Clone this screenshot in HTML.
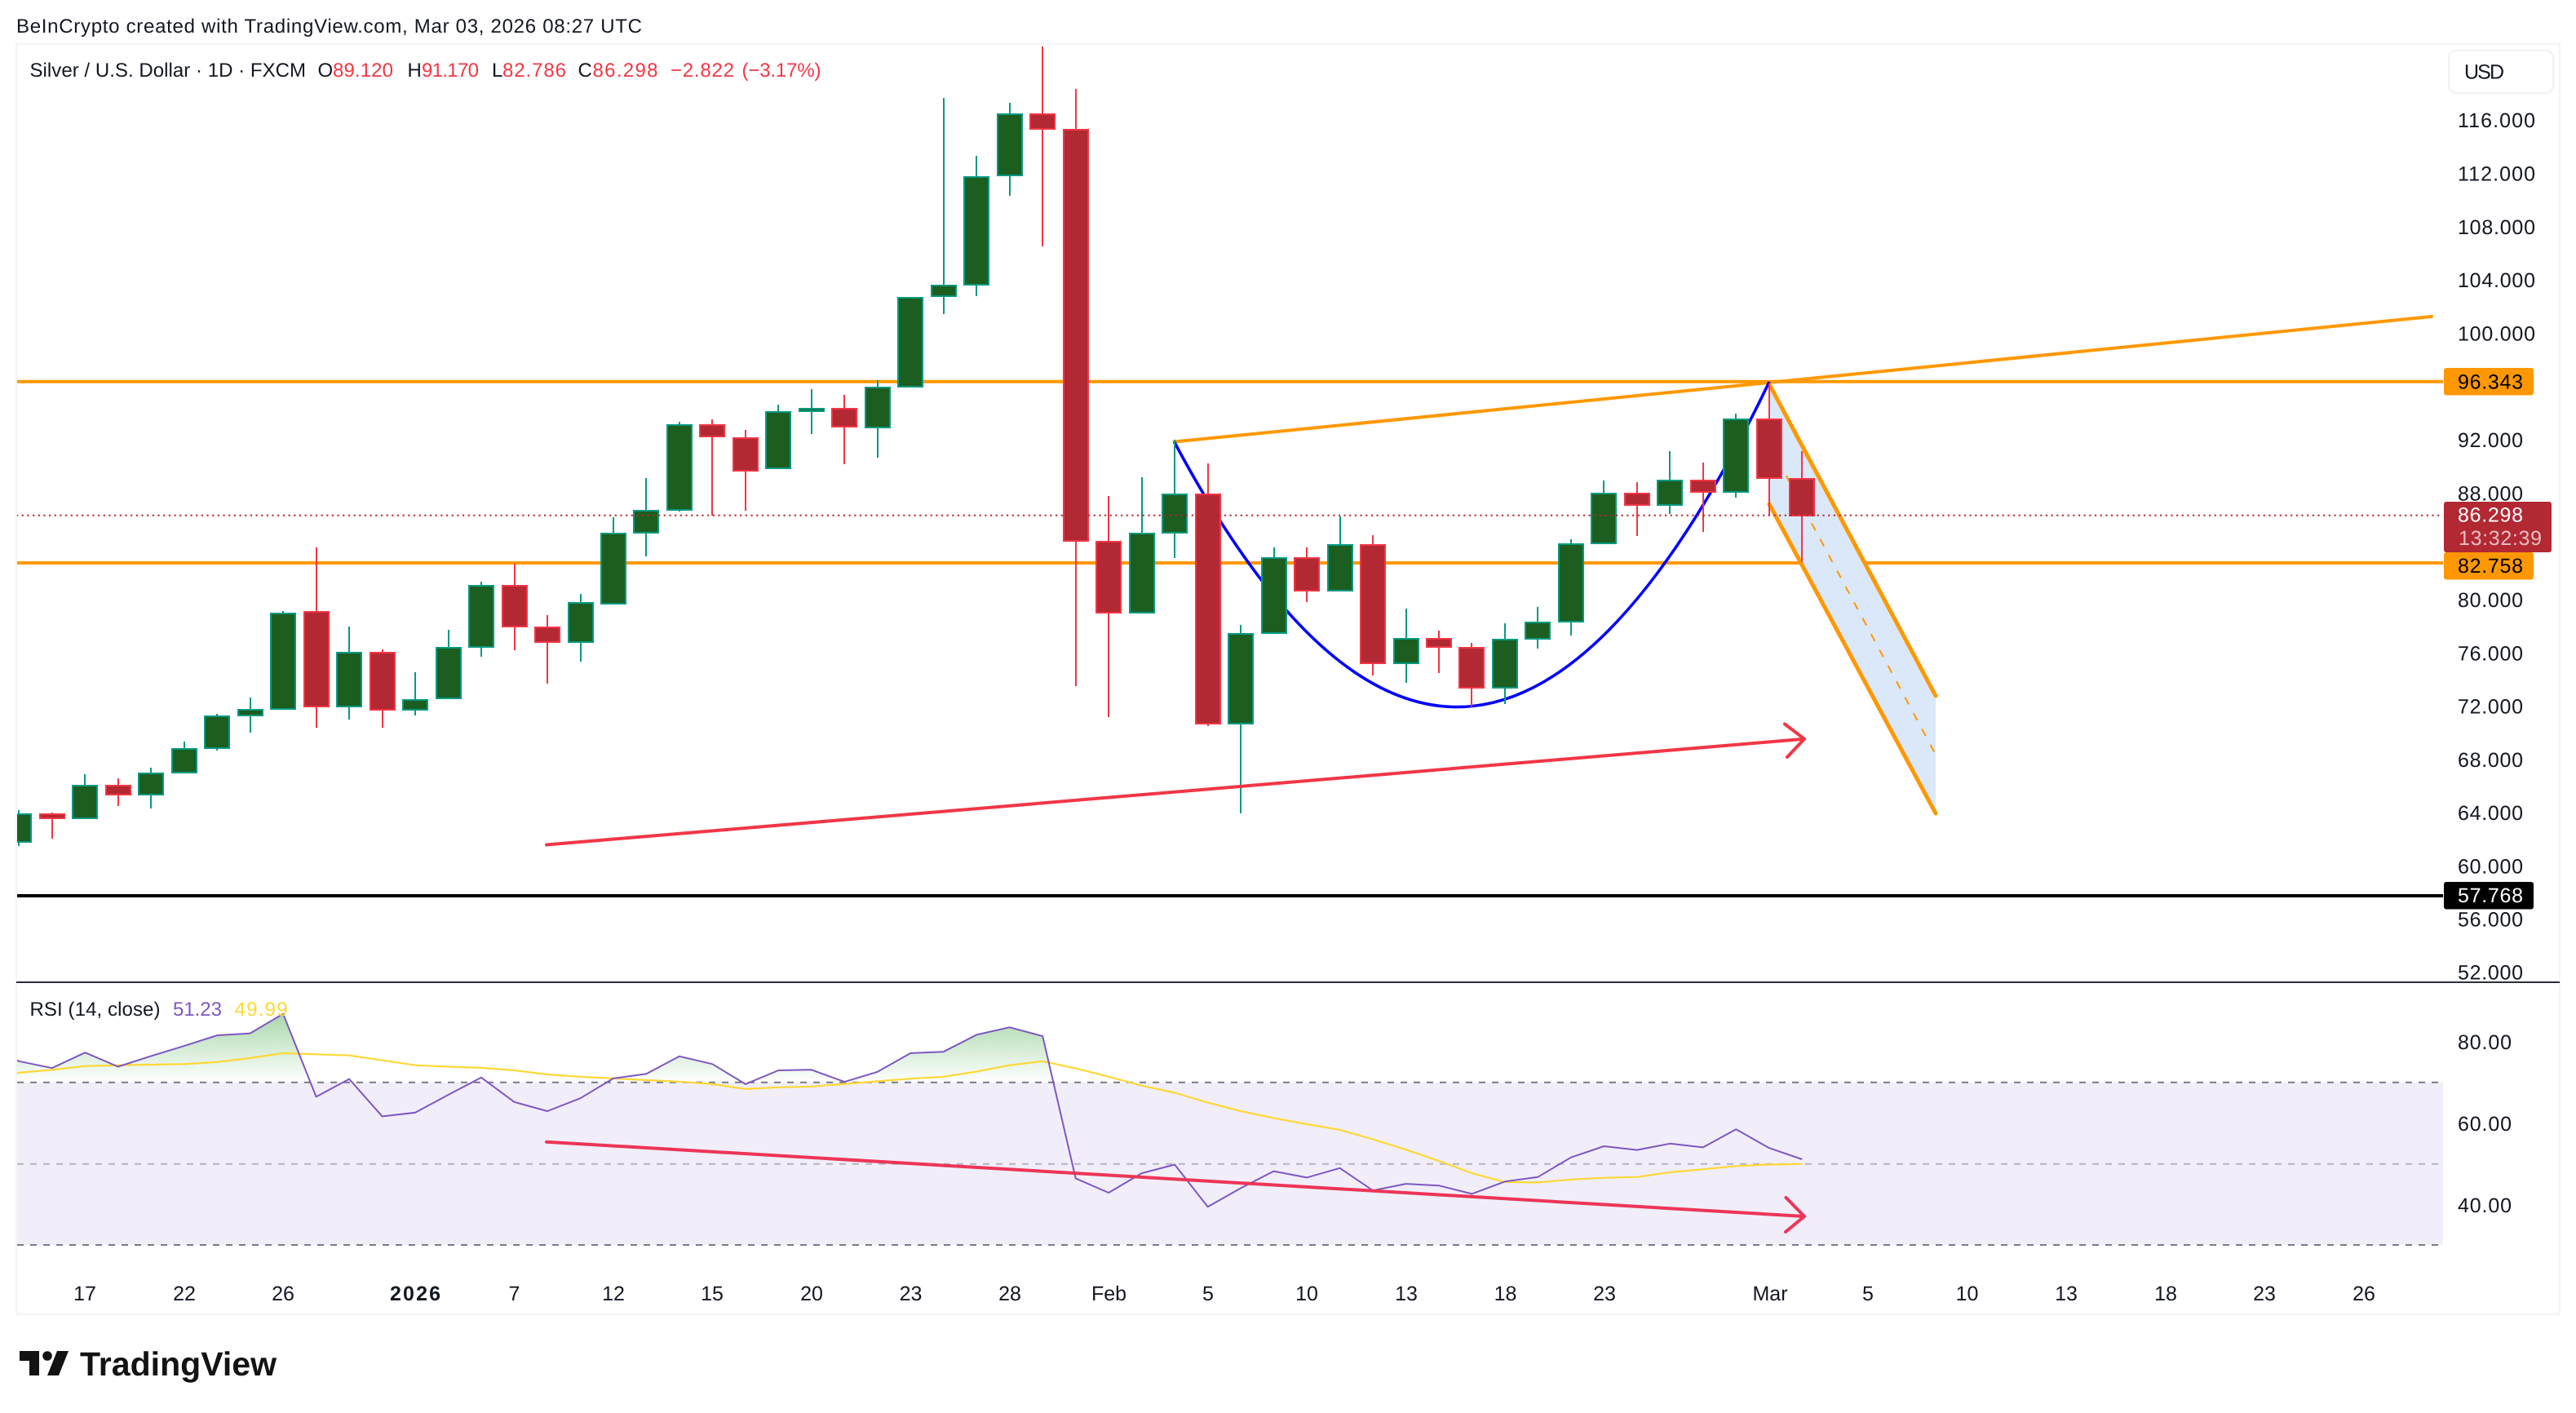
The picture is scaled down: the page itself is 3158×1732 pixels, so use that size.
<!DOCTYPE html>
<html><head><meta charset="utf-8"><title>Silver / U.S. Dollar</title>
<style>
html,body{margin:0;padding:0;background:#fff;width:3158px;height:1732px;overflow:hidden}
svg{display:block}
text{font-family:"Liberation Sans",sans-serif;font-size:25px;fill:#131722;text-rendering:geometricPrecision}
.r{fill:#F23645}
.hd{font-size:24px}
.ax text{text-anchor:middle}
</style></head><body>
<svg width="3158" height="1732" viewBox="0 0 3158 1732" xmlns="http://www.w3.org/2000/svg">
<defs>
<clipPath id="pc"><rect x="21" y="55" width="2974" height="1148"/></clipPath>
<clipPath id="rc"><rect x="21" y="1205" width="2974" height="370"/></clipPath>
<clipPath id="ob"><rect x="21" y="1205" width="2974" height="121.8"/></clipPath>
<linearGradient id="gg" gradientUnits="userSpaceOnUse" x1="0" y1="1240" x2="0" y2="1327">
<stop offset="0" stop-color="#4CAF50" stop-opacity=".5"/><stop offset="1" stop-color="#4CAF50" stop-opacity="0"/>
</linearGradient>
</defs>
<rect width="3158" height="1732" fill="#fff"/>
<text class="hd" x="20" y="40" textLength="767">BeInCrypto created with TradingView.com, Mar 03, 2026 08:27 UTC</text>
<rect x="20" y="54" width="3118" height="1557" fill="#fff" stroke="#f4f4f4" stroke-width="2"/>

<g clip-path="url(#pc)">
<path d="M20 467.7H2995M20 690H2995" stroke="#FF9800" stroke-width="4" fill="none"/>
<path d="M20 1098H2995" stroke="#000" stroke-width="4" fill="none"/>
<path d="M2169 471L2373 853V997L2169 618Z" fill="#dbe8fa"/>
<path d="M2169 471L2373 853M2169 618L2373 997" stroke="#FF9800" stroke-width="5" stroke-linecap="round" fill="none"/>
<path d="M2169 544.5L2373 925" stroke="#FF9800" stroke-width="2" stroke-dasharray="10 12" fill="none"/>
<path d="M1439.5 541.5L2981 388" stroke="#FF9800" stroke-width="4" stroke-linecap="round" fill="none"/>
<path d="M1439.5 541.5Q1805 1226.5 2169 468" stroke="#0000ff" stroke-width="3.6" fill="none"/>

<path stroke="#089981" stroke-width="2" fill="none" d="M23 993V1037M104 949V1004M185 941V991M226 909V948M266 875V920M307 855V898M347 749V870M428 768V882M509 824V877M550 772V857M590 713V805M712 728V811M752 634V741M792 586V682M833 517V627M954 496V575M995 477V532M1076 466V561M1157 120V385M1197 191V363M1238 126V240M1400 585V752M1440 539V684M1521 766V997M1562 671V777M1643 633V725M1724 746V837M1845 764V863M1885 744V795M1926 661V779M1966 589V667M2047 553V630M2128 507V610"/>
<path stroke="#F23645" stroke-width="2" fill="none" d="M64 996V1028M145 954V988M388 671V892M469 796V892M631 691V797M671 754V838M873 514V632M914 527V626M1035 484V569M1278 57V302M1319 109V841M1359 608V879M1481 568V890M1602 671V738M1683 656V828M1764 773V825M1804 788V867M2007 591V657M2088 567V652M2169 470V632M2209 553V689"/>
<path fill="#1B5E20" stroke="#089981" stroke-width="2" d="M8 998h30V1032h-30zM89 963h30V1003h-30zM170 948h30V974h-30zM211 918h30V947h-30zM251 878h30V917h-30zM292 870h30V877h-30zM332 752h30V869h-30zM413 800h30V866h-30zM494 858h30V870h-30zM535 794h30V856h-30zM575 718h30V793h-30zM697 739h30V787h-30zM737 654h30V740h-30zM777 626h30V653h-30zM818 521h30V625h-30zM939 505h30V574h-30zM980 501h30V504h-30zM1061 475h30V524h-30zM1101 365h30V474h-30zM1142 350h30V363h-30zM1182 217h30V349h-30zM1223 140h30V215h-30zM1385 654h30V751h-30zM1425 606h30V653h-30zM1506 777h30V887h-30zM1547 684h30V776h-30zM1628 668h30V724h-30zM1709 783h30V813h-30zM1830 784h30V843h-30zM1870 763h30V783h-30zM1911 667h30V762h-30zM1951 605h30V666h-30zM2032 589h30V619h-30zM2113 514h30V603h-30z"/>
<path fill="#B22833" stroke="#F23645" stroke-width="2" d="M49 998h30V1003h-30zM130 963h30V974h-30zM373 750h30V866h-30zM454 800h30V870h-30zM616 718h30V768h-30zM656 769h30V787h-30zM858 521h30V535h-30zM899 537h30V577h-30zM1020 501h30V523h-30zM1263 140h30V158h-30zM1304 159h30V663h-30zM1344 664h30V751h-30zM1466 606h30V887h-30zM1587 684h30V724h-30zM1668 668h30V813h-30zM1749 783h30V793h-30zM1789 794h30V843h-30zM1992 605h30V619h-30zM2073 589h30V603h-30zM2154 514h30V586h-30zM2194 587h30V632h-30z"/>

<path d="M20 631.8H2995" stroke="#B22833" stroke-width="2" stroke-dasharray="2.2 4.47" fill="none"/>
<path d="M670 1035.5L2212 905.8M2188 887.5L2212 905.8L2191 928" stroke="#F23645" stroke-width="4" stroke-linecap="round" stroke-linejoin="round" fill="none"/>
</g>

<!-- Separator -->
<rect x="20" y="1203" width="3118" height="2" fill="#2a2e39"/>

<!-- RSI -->
<rect x="21" y="1327" width="2974" height="199" fill="#f1eef9"/>
<path d="M21 1326.8H2995M21 1526H2995" stroke="#787b86" stroke-width="2" stroke-dasharray="8 8" fill="none"/>
<path d="M21 1426.8H2995" stroke="#787b86" stroke-opacity=".5" stroke-width="2" stroke-dasharray="8 8" fill="none"/>
<g clip-path="url(#ob)">
<path fill="url(#gg)" d="M19 1326.8L19 1299L23.3 1300.8L63.8 1309.2L104.3 1290.2L144.7 1307.5L185.2 1294.4L225.7 1282.1L266.2 1269.1L306.7 1266.6L347.1 1242.7L387.6 1344.4L428.1 1322.6L468.6 1368.4L509.1 1363.8L549.5 1342L590 1320.8L630.5 1350.8L671 1362L711.5 1346.2L751.9 1321.9L792.4 1316.3L832.9 1294.8L873.4 1304.3L913.9 1328.9L954.3 1312L994.8 1311.3L1035.3 1326.1L1075.8 1313.8L1116.3 1290.9L1156.7 1289.2L1197.2 1268.4L1237.7 1259.2L1278.2 1270.1L1318.7 1444.4L1318.7 1326.8Z"/>
</g>
<g clip-path="url(#rc)" fill="none" stroke-linejoin="round">
<polyline stroke="#FDD835" stroke-width="2.2" points="19 1316 23.3 1314.9 63.8 1311.3 104.3 1306.8 144.7 1305.7 185.2 1305 225.7 1304.3 266.2 1301.8 306.7 1296.9 347.1 1290.9 387.6 1292.3 428.1 1293.7 468.6 1299.7 509.1 1305.7 549.5 1307.5 590 1308.9 630.5 1312 671 1317 711.5 1319.8 751.9 1321.9 792.4 1324 832.9 1325.8 873.4 1328.9 913.9 1334.9 954.3 1332.8 994.8 1331.8 1035.3 1328.6 1075.8 1325.4 1116.3 1322.2 1156.7 1319.8 1197.2 1313.4 1237.7 1305.7 1278.2 1300.8 1318.7 1309.6 1359.1 1319.8 1399.6 1330.7 1440.1 1339.5 1480.6 1351.5 1521.1 1362 1561.5 1370.5 1602 1377.9 1642.5 1384.9 1683 1396.5 1723.5 1409.2 1763.9 1422.9 1804.4 1438.1 1844.9 1449 1885.4 1449.4 1925.9 1445.8 1966.3 1443.7 2006.8 1442.7 2047.3 1437 2087.8 1433.2 2128.3 1429.3 2168.7 1427.5 2209.2 1426.8"/>
<polyline stroke="#7E57C2" stroke-width="2" points="19 1299 23.3 1300.8 63.8 1309.2 104.3 1290.2 144.7 1307.5 185.2 1294.4 225.7 1282.1 266.2 1269.1 306.7 1266.6 347.1 1242.7 387.6 1344.4 428.1 1322.6 468.6 1368.4 509.1 1363.8 549.5 1342 590 1320.8 630.5 1350.8 671 1362 711.5 1346.2 751.9 1321.9 792.4 1316.3 832.9 1294.8 873.4 1304.3 913.9 1328.9 954.3 1312 994.8 1311.3 1035.3 1326.1 1075.8 1313.8 1116.3 1290.9 1156.7 1289.2 1197.2 1268.4 1237.7 1259.2 1278.2 1270.1 1318.7 1444.4 1359.1 1462 1399.6 1438.1 1440.1 1427.5 1480.6 1479.3 1521.1 1456.4 1561.5 1435.6 1602 1443.4 1642.5 1431.8 1683 1459.2 1723.5 1451.1 1763.9 1453.2 1804.4 1463.4 1844.9 1448.3 1885.4 1442.7 1925.9 1418.7 1966.3 1405 2006.8 1409.6 2047.3 1401.8 2087.8 1406.4 2128.3 1384.2 2168.7 1407.1 2209.2 1421"/>
<path d="M670 1399.7L2212 1491M2189.5 1468L2212 1491L2189 1510" stroke="#ec3558" stroke-width="4" stroke-linecap="round" stroke-linejoin="round"/>
</g>

<!-- Legends -->
<text class="hd" x="36.5" y="94" textLength="338.5">Silver / U.S. Dollar · 1D · FXCM</text>
<text class="hd" x="389.5" y="94">O</text><text class="hd r" x="408" y="94" textLength="74">89.120</text>
<text class="hd" x="499.5" y="94">H</text><text class="hd r" x="517" y="94" textLength="70">91.170</text>
<text class="hd" x="603" y="94">L</text><text class="hd r" x="616" y="94" textLength="78">82.786</text>
<text class="hd" x="708.5" y="94">C</text><text class="hd r" x="726.5" y="94" textLength="80">86.298</text>
<text class="hd r" x="822" y="94" textLength="78">−2.822</text>
<text class="hd r" x="909.5" y="94" textLength="97">(−3.17%)</text>
<text class="hd" x="36.5" y="1245" textLength="160">RSI (14, close)</text>
<text class="hd" x="212" y="1245" textLength="60" style="fill:#7E57C2">51.23</text>
<text class="hd" x="287.6" y="1245" textLength="65" style="fill:#FDD835">49.99</text>

<!-- USD -->
<rect x="3002" y="62" width="128" height="52" rx="9" fill="#fff" stroke="#f1f1f1" stroke-width="2"/>
<text x="3021" y="96.5" textLength="49">USD</text>

<!-- Price axis -->
<g>
<text x="3013" y="156" textLength="95">116.000</text>
<text x="3013" y="221.5" textLength="95">112.000</text>
<text x="3013" y="287" textLength="95">108.000</text>
<text x="3013" y="352" textLength="95">104.000</text>
<text x="3013" y="417.5" textLength="95">100.000</text>
<text x="3013" y="548" textLength="80">92.000</text>
<text x="3013" y="613.5" textLength="80">88.000</text>
<text x="3013" y="744" textLength="80">80.000</text>
<text x="3013" y="809.5" textLength="80">76.000</text>
<text x="3013" y="874.5" textLength="80">72.000</text>
<text x="3013" y="940" textLength="80">68.000</text>
<text x="3013" y="1005" textLength="80">64.000</text>
<text x="3013" y="1070.5" textLength="80">60.000</text>
<text x="3013" y="1135.5" textLength="80">56.000</text>
<text x="3013" y="1200.5" textLength="80">52.000</text>
<text x="3013" y="1286" textLength="66">80.00</text>
<text x="3013" y="1386" textLength="66">60.00</text>
<text x="3013" y="1486" textLength="66">40.00</text>
</g>

<!-- Tags -->
<rect x="2996" y="451" width="110" height="33.5" rx="3" fill="#FF9800"/>
<text x="3013" y="476.5" textLength="80" style="fill:#000">96.343</text>
<rect x="2996" y="615" width="132" height="62" rx="3" fill="#B22833"/>
<text x="3013" y="639.5" textLength="80" style="fill:#fff">86.298</text>
<text x="3014" y="668" textLength="102" style="fill:#fff;fill-opacity:.7">13:32:39</text>
<rect x="2996" y="677" width="110" height="33.5" rx="3" fill="#FF9800"/>
<text x="3013" y="702" textLength="80" style="fill:#000">82.758</text>
<rect x="2996" y="1081" width="110" height="33.5" rx="3" fill="#000"/>
<text x="3013" y="1106" textLength="80" style="fill:#fff">57.768</text>

<!-- Time axis -->
<g class="ax">
<text x="104" y="1594">17</text><text x="226" y="1594">22</text><text x="347" y="1594">26</text>
<text x="509" y="1594" textLength="62" style="font-weight:700">2026</text>
<text x="630.5" y="1594">7</text><text x="752" y="1594">12</text><text x="873" y="1594">15</text><text x="995" y="1594">20</text>
<text x="1116.5" y="1594">23</text><text x="1238" y="1594">28</text><text x="1359.5" y="1594">Feb</text><text x="1481" y="1594">5</text>
<text x="1602" y="1594">10</text><text x="1724" y="1594">13</text><text x="1845.5" y="1594">18</text><text x="1967" y="1594">23</text>
<text x="2170" y="1594">Mar</text><text x="2290" y="1594">5</text><text x="2411.5" y="1594">10</text><text x="2533" y="1594">13</text>
<text x="2655" y="1594">18</text><text x="2776" y="1594">23</text><text x="2898" y="1594">26</text>
</g>

<!-- Logo -->
<path fill="#131313" d="M24 1656H48V1686H36V1668H24ZM70 1656H84L72 1686H58Z"/>
<circle cx="58" cy="1662" r="5.8" fill="#131313"/>
<text x="98" y="1686" textLength="241" lengthAdjust="spacingAndGlyphs" style="font-size:41px;font-weight:700;fill:#131313">TradingView</text>
</svg>
</body></html>
